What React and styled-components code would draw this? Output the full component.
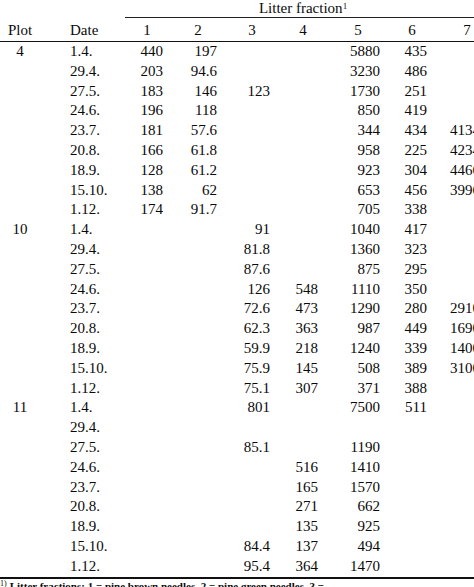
import React from 'react';
import styled, { createGlobalStyle } from 'styled-components';

const GlobalStyle = createGlobalStyle`
  html, body {
    margin: 0;
    padding: 0;
    background: #ffffff;
    overflow: hidden;
  }
`;

const Page = styled.div`
  width: 474px;
  height: 587px;
  overflow: hidden;
  font-family: 'Liberation Serif', 'Times New Roman', serif;
  font-size: 15px;
  color: #0a0a0a;
`;

const Table = styled.table`
  width: 502px;
  table-layout: fixed;
  border-collapse: separate;
  border-spacing: 0;
`;

const GroupCell = styled.th`
  padding: 0;
  font-weight: normal;
  line-height: 17px;
  height: 18px;
  vertical-align: top;
`;

const GroupLabel = styled.div`
  margin-left: 5px;
  margin-right: 21px;
  border-bottom: 1px solid #222;
  text-align: center;
  line-height: 17px;
`;

const Sup = styled.sup`
  font-size: 9px;
  vertical-align: top;
  position: relative;
  top: -2px;
`;

const HeadCell = styled.th`
  padding: 4px 0 2px;
  font-weight: normal;
  line-height: 17px;
  border-bottom: 1.5px solid #111;
  text-align: ${p => p.$align || 'center'};
  padding-left: ${p => p.$pl || 0}px;
`;

const Cell = styled.td`
  padding: 0;
  line-height: 19.8px;
  height: 19.8px;
  white-space: nowrap;
  overflow: hidden;
  text-align: ${p => p.$align || 'right'};
  padding-left: ${p => p.$pl || 0}px;
  padding-right: ${p => p.$pr || 0}px;
`;

const Footer = styled.div`
  border-top: 2px solid #111;
  font-size: 11px;
  font-weight: bold;
  line-height: 14px;
  white-space: nowrap;
`;

const FootSup = styled.sup`
  font-size: 8px;
  font-weight: normal;
  vertical-align: top;
  position: relative;
  top: -2px;
  margin-right: 3px;
`;

// column widths and the padding that puts the numbers where they sit
const cols = [
  { w: 40 },
  { w: 80 },
  { w: 54, pr: 11 },
  { w: 48, pr: 5 },
  { w: 60, pr: 12 },
  { w: 42, pr: 6 },
  { w: 68, pr: 12 },
  { w: 40, pr: 5 },
  { w: 70, pl: 18, align: 'left' },
];

const groups = [
  {
    plot: '4',
    rows: [
      ['1.4.', '440', '197', '', '', '5880', '435', ''],
      ['29.4.', '203', '94.6', '', '', '3230', '486', ''],
      ['27.5.', '183', '146', '123', '', '1730', '251', ''],
      ['24.6.', '196', '118', '', '', '850', '419', ''],
      ['23.7.', '181', '57.6', '', '', '344', '434', '4134'],
      ['20.8.', '166', '61.8', '', '', '958', '225', '4234'],
      ['18.9.', '128', '61.2', '', '', '923', '304', '4466'],
      ['15.10.', '138', '62', '', '', '653', '456', '3996'],
      ['1.12.', '174', '91.7', '', '', '705', '338', ''],
    ],
  },
  {
    plot: '10',
    rows: [
      ['1.4.', '', '', '91', '', '1040', '417', ''],
      ['29.4.', '', '', '81.8', '', '1360', '323', ''],
      ['27.5.', '', '', '87.6', '', '875', '295', ''],
      ['24.6.', '', '', '126', '548', '1110', '350', ''],
      ['23.7.', '', '', '72.6', '473', '1290', '280', '2910'],
      ['20.8.', '', '', '62.3', '363', '987', '449', '1690'],
      ['18.9.', '', '', '59.9', '218', '1240', '339', '1400'],
      ['15.10.', '', '', '75.9', '145', '508', '389', '3100'],
      ['1.12.', '', '', '75.1', '307', '371', '388', ''],
    ],
  },
  {
    plot: '11',
    rows: [
      ['1.4.', '', '', '801', '', '7500', '511', ''],
      ['29.4.', '', '', '', '', '', '', ''],
      ['27.5.', '', '', '85.1', '', '1190', '', ''],
      ['24.6.', '', '', '', '516', '1410', '', ''],
      ['23.7.', '', '', '', '165', '1570', '', ''],
      ['20.8.', '', '', '', '271', '662', '', ''],
      ['18.9.', '', '', '', '135', '925', '', ''],
      ['15.10.', '', '', '84.4', '137', '494', '', ''],
      ['1.12.', '', '', '95.4', '364', '1470', '', ''],
    ],
  },
];

const App = () => {
  return (
    <Page>
      <GlobalStyle />
      <Table>
        <colgroup>
          {cols.map((c, i) => (
            <col key={i} style={{ width: c.w }} />
          ))}
        </colgroup>
        <thead>
          <tr>
            <GroupCell />
            <GroupCell />
            <GroupCell colSpan={7}>
              <GroupLabel>
                Litter fraction<Sup>1</Sup>
              </GroupLabel>
            </GroupCell>
          </tr>
          <tr>
            <HeadCell>Plot</HeadCell>
            <HeadCell $align="left" $pl={30}>Date</HeadCell>
            {[1, 2, 3, 4, 5, 6, 7].map(n => (
              <HeadCell key={n}>{n}</HeadCell>
            ))}
          </tr>
        </thead>
        <tbody>
          {groups.map(g =>
            g.rows.map((r, ri) => (
              <tr key={g.plot + r[0]}>
                <Cell $align="center">{ri === 0 ? g.plot : ''}</Cell>
                <Cell $align="left" $pl={30}>{r[0]}</Cell>
                {r.slice(1).map((v, ci) => {
                  const c = cols[ci + 2];
                  return (
                    <Cell key={ci} $align={c.align} $pl={c.pl} $pr={c.pr}>
                      {v}
                    </Cell>
                  );
                })}
              </tr>
            ))
          )}
        </tbody>
      </Table>
      <Footer>
        <FootSup>1)</FootSup>Litter fractions: 1 = pine brown needles, 2 = pine green needles, 3 =
      </Footer>
    </Page>
  );
};

export default App;
